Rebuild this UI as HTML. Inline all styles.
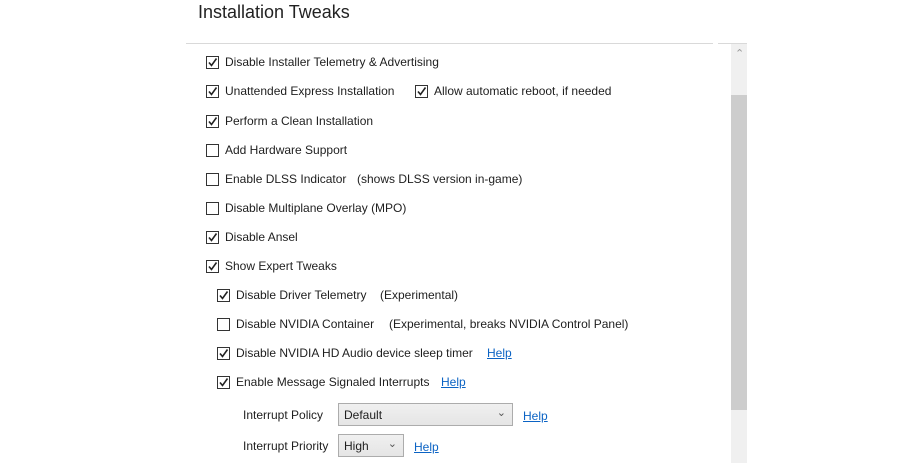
<!DOCTYPE html><html><head><style>
body{margin:0;width:924px;height:463px;background:#fff;font-family:"Liberation Sans",sans-serif;font-size:12px;color:#1e1e1e;position:relative;overflow:hidden}
.a{position:absolute;white-space:nowrap}
h1{position:absolute;left:198px;top:2px;margin:0;font-weight:normal;font-size:18px;color:#222}
.cb{position:absolute;width:11px;height:11px;border:1px solid #333;background:#fff}
.cb svg{position:absolute;left:0;top:0}
.l{color:#0b63c4;text-decoration:underline}
.dd{position:absolute;border:1px solid #acacac;background:linear-gradient(#f0f0f0,#e5e5e5);height:23px;box-sizing:border-box;padding:4px 5px;font-size:12px}
.dd i{position:absolute;right:6px;top:2px;font-style:normal;font-size:11px;color:#555}
</style></head><body>
<h1>Installation Tweaks</h1>
<div class="a" style="left:186px;top:43px;width:527px;height:1px;background:#d9d9d9"></div>
<div class="a" style="left:718px;top:43px;width:29px;height:1px;background:#d9d9d9"></div>
<div class="a" style="left:731px;top:44px;width:16px;height:419px;background:#f0f0f0"></div>
<div class="a" style="left:731px;top:95px;width:16px;height:315px;background:#cdcdcd"></div>
<div class="a" style="left:735px;top:47px;font-size:11px;color:#999">&#8963;</div>
<div id="c"></div>
<script>
var rows=[[62,206,1,"Disable Installer Telemetry &amp; Advertising"],[91,206,1,"Unattended Express Installation"],[91,415,1,"Allow automatic reboot, if needed"],[121,206,1,"Perform a Clean Installation"],[150,206,0,"Add Hardware Support"],[179,206,0,"Enable DLSS Indicator"],[208,206,0,"Disable Multiplane Overlay (MPO)"],[237,206,1,"Disable Ansel"],[266,206,1,"Show Expert Tweaks"],[295,217,1,"Disable Driver Telemetry"],[324,217,0,"Disable NVIDIA Container"],[353,217,1,"Disable NVIDIA HD Audio device sleep timer"],[382,217,1,"Enable Message Signaled Interrupts"]];
var h="";rows.forEach(function(r){h+='<div class="cb" style="left:'+r[1]+'px;top:'+(r[0]-6)+'px">'+(r[2]?'<svg width="11" height="11"><path d="M2 5.5L4.5 8.5L9.5 1.5" fill="none" stroke="#222" stroke-width="1.6"/></svg>':'')+'</div><div class="a" style="left:'+(r[1]+19)+'px;top:'+(r[0]-7)+'px">'+r[3]+'</div>';});
document.getElementById("c").innerHTML=h;
</script>
<div class="a" style="left:357px;top:172px">(shows DLSS version in-game)</div>
<div class="a" style="left:380px;top:288px">(Experimental)</div>
<div class="a" style="left:389px;top:317px">(Experimental, breaks NVIDIA Control Panel)</div>
<div class="a l" style="left:487px;top:346px">Help</div>
<div class="a l" style="left:441px;top:375px">Help</div>
<div class="a" style="left:243px;top:408px">Interrupt Policy</div>
<div class="dd" style="left:338px;top:403px;width:175px">Default<i>&#8964;</i></div>
<div class="a l" style="left:523px;top:409px">Help</div>
<div class="a" style="left:243px;top:439px">Interrupt Priority</div>
<div class="dd" style="left:338px;top:434px;width:66px">High<i>&#8964;</i></div>
<div class="a l" style="left:414px;top:440px">Help</div>
</body></html>
